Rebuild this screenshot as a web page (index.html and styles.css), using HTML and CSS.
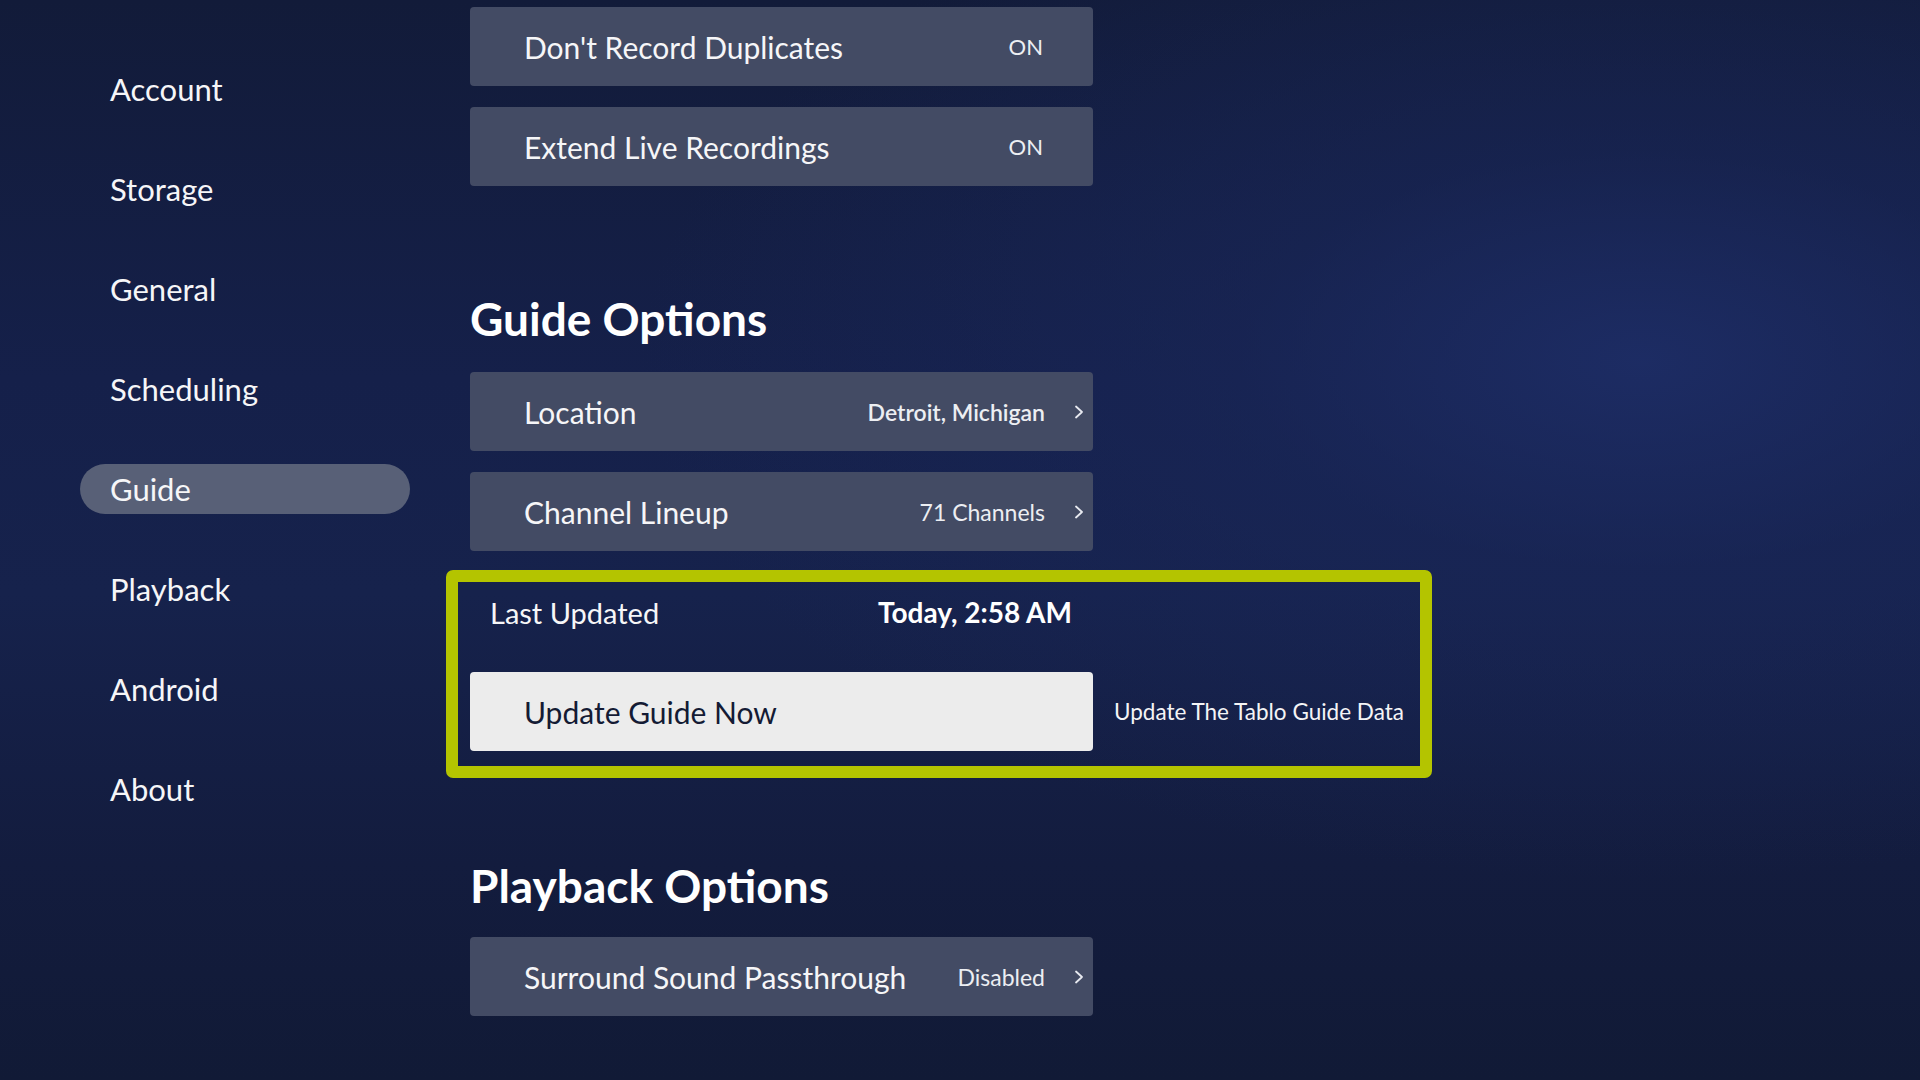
FILE: index.html
```html
<!DOCTYPE html>
<html lang="en">
<head>
<meta charset="utf-8">
<title>Settings - Guide</title>
<link rel="stylesheet" href="styles.css">
</head>
<body>
<div class="screen">
  <nav class="sidebar">
    <div class="nav-item">Account</div>
    <div class="nav-item">Storage</div>
    <div class="nav-item">General</div>
    <div class="nav-item">Scheduling</div>
    <div class="nav-item active">Guide</div>
    <div class="nav-item">Playback</div>
    <div class="nav-item">Android</div>
    <div class="nav-item">About</div>
  </nav>
  <main class="content">
    <div class="row"><span class="label">Don't Record Duplicates</span><span class="value toggle">ON</span></div>
    <div class="row"><span class="label">Extend Live Recordings</span><span class="value toggle">ON</span></div>

    <h2 class="section-title first">Guide Options</h2>
    <div class="row link"><span class="label">Location</span><span class="value strong">Detroit, Michigan</span><svg class="chev" viewBox="0 0 10 14"><polyline points="2,1.5 8,7 2,12.5"/></svg></div>
    <div class="row link"><span class="label">Channel Lineup</span><span class="value">71 Channels</span><svg class="chev" viewBox="0 0 10 14"><polyline points="2,1.5 8,7 2,12.5"/></svg></div>

    <section class="focus-box">
      <div class="info-line"><span class="info-label">Last Updated</span><span class="info-value">Today, 2:58 AM</span></div>
      <div class="action-line">
        <div class="button">Update Guide Now</div>
        <span class="hint">Update The Tablo Guide Data</span>
      </div>
    </section>

    <h2 class="section-title second">Playback Options</h2>
    <div class="row link"><span class="label">Surround Sound Passthrough</span><span class="value">Disabled</span><svg class="chev" viewBox="0 0 10 14"><polyline points="2,1.5 8,7 2,12.5"/></svg></div>
  </main>
</div>
</body>
</html>
```

FILE: styles.css
```css
html, body {
  margin: 0;
  padding: 0;
}

body {
  width: 1920px;
  height: 1080px;
  overflow: hidden;
  font-family: "Lato", "Noto Sans", "Liberation Sans", sans-serif;
  color: #f4f4f6;
  background-color: #131c3c;
  background-image:
    radial-gradient(ellipse 1000px 520px at 1640px 360px, rgba(30, 46, 104, 0.85) 0%, rgba(26, 40, 92, 0.5) 40%, rgba(19, 28, 60, 0) 100%),
    linear-gradient(180deg, #121b39 0%, #15204a 35%, #16224c 55%, #131c3e 80%, #111a36 100%);
}

.screen {
  display: flex;
  height: 1080px;
}

.sidebar {
  box-sizing: border-box;
  width: 470px;
  padding: 64px 0 0 80px;
  display: flex;
  flex-direction: column;
  gap: 50px;
}

.nav-item {
  box-sizing: border-box;
  width: 330px;
  height: 50px;
  line-height: 50px;
  padding-left: 30px;
  border-radius: 25px;
  font-size: 31px;
  color: #f6f6f8;
  white-space: nowrap;
}

.nav-item.active {
  background: #586077;
}

.content {
  width: 623px;
  padding-top: 7px;
  display: flex;
  flex-direction: column;
}

.row {
  box-sizing: border-box;
  height: 79px;
  display: flex;
  align-items: center;
  padding: 0 50px 0 54px;
  background: #434b64;
  border-radius: 4px;
}

.row + .row {
  margin-top: 21px;
}

.row.link {
  padding-right: 9px;
}

.label {
  flex: 1;
  font-size: 30px;
  color: #f6f6f8;
  white-space: nowrap;
}

.value {
  font-size: 23px;
  color: #eceef2;
  white-space: nowrap;
}

.value.toggle {
  font-size: 22px;
}

.value.strong {
  font-weight: 600;
}

.row.link .value {
  margin-right: 29px;
}

.chev {
  width: 10px;
  height: 14px;
  fill: none;
  stroke: #e8eaf0;
  stroke-width: 1.8;
  stroke-linecap: round;
  stroke-linejoin: round;
}

.section-title {
  margin: 0;
  height: 50px;
  line-height: 50px;
  font-size: 46px;
  font-weight: 700;
  color: #ffffff;
  white-space: nowrap;
}

.section-title.first {
  margin: 108px 0 28px;
}

.section-title.second {
  margin: 83px 0 26px;
}

.focus-box {
  box-sizing: border-box;
  width: 986px;
  height: 208px;
  margin: 19px 0 0 -24px;
  padding: 0 16px 15px 12px;
  border: 12px solid #b4c400;
  border-radius: 7px;
  display: flex;
  flex-direction: column;
}

.info-line {
  height: 60px;
  display: flex;
  align-items: center;
  padding-left: 20px;
}

.info-label {
  width: 388px;
  font-size: 29px;
  color: #f6f6f8;
  white-space: nowrap;
}

.info-value {
  font-size: 28px;
  font-weight: 700;
  color: #ffffff;
  white-space: nowrap;
}

.action-line {
  margin-top: 30px;
  display: flex;
  align-items: center;
  gap: 21px;
}

.button {
  box-sizing: border-box;
  width: 623px;
  height: 79px;
  display: flex;
  align-items: center;
  padding-left: 54px;
  background: #ececec;
  border-radius: 4px;
  font-size: 30px;
  color: #141b34;
  white-space: nowrap;
}

.hint {
  font-size: 22.5px;
  color: #f4f4f6;
  white-space: nowrap;
}
```
